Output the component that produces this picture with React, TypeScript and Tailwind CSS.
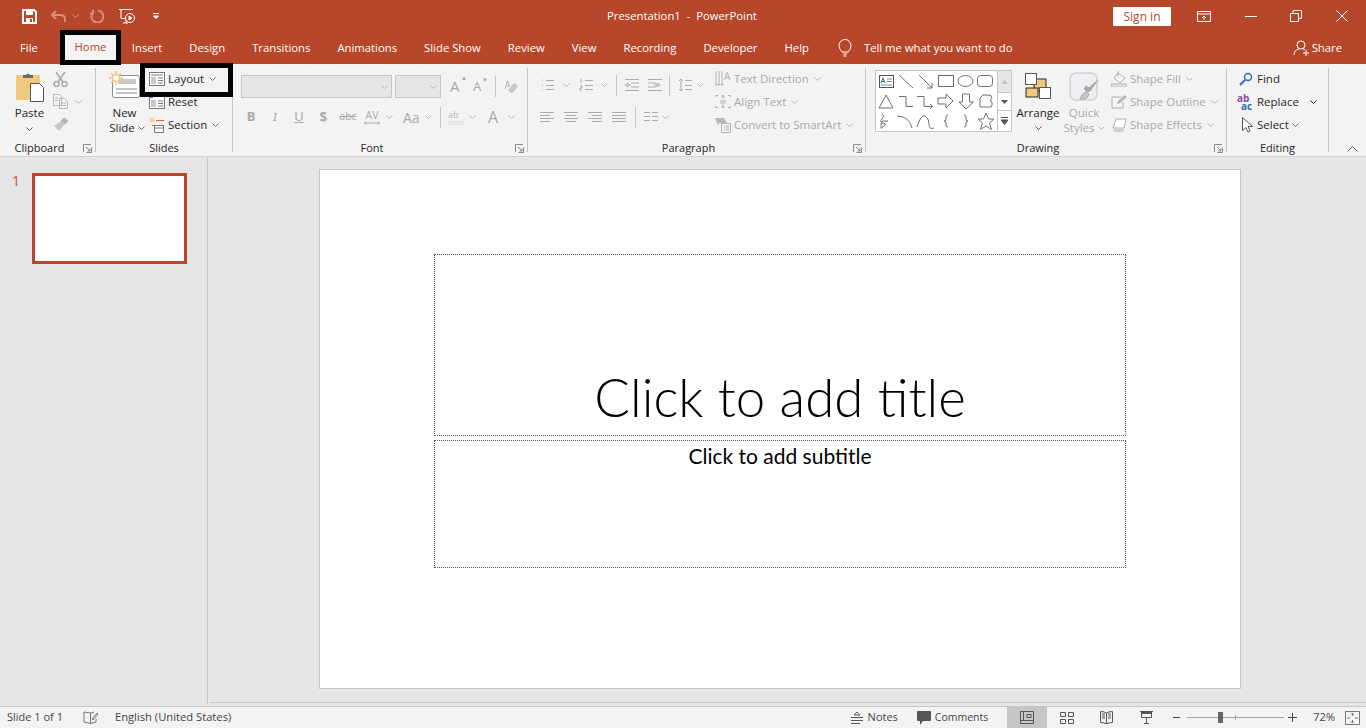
import type { ReactNode } from "react";

const ui = "font-['Open_Sans','Noto_Sans',sans-serif]";

function Ico({ w, h, children, className = "" }: { w: number; h: number; children: ReactNode; className?: string }) {
  return (
    <svg width={w} height={h} viewBox={`0 0 ${w} ${h}`} fill="none" stroke="currentColor" strokeWidth="1" className={`shrink-0 ${className}`}>
      {children}
    </svg>
  );
}

function Chev({ className = "text-[#6a6a6a]" }: { className?: string }) {
  return (
    <Ico w={7} h={4} className={className}>
      <path d="M.5.5 3.5 3.5 6.5.5" />
    </Ico>
  );
}

function Launcher() {
  return (
    <Ico w={9} h={9} className="absolute right-[3px] top-[4px] text-[#8a8a8a]">
      <path d="M.5 8V.5H8M8.5 3.5v5h-5M3 3l4 4M7 4.5V7H4.5" />
    </Ico>
  );
}

function Group({ w, label, launcher, children }: { w: string; label: string; launcher?: boolean; children: ReactNode }) {
  return (
    <div className={`flex flex-col shrink-0 ${w}`}>
      <div className="h-[76px] flex">{children}</div>
      <div className={`relative h-[16px] text-center text-[11px] leading-[16px] text-[#262626] ${launcher ? "pr-[16px]" : ""}`}>
        {label}
        {launcher && <Launcher />}
      </div>
    </div>
  );
}

const Sep = () => <div className="w-px h-[84px] mt-[4px] bg-[#c6c6c6] shrink-0" />;
const MiniSep = ({ h = "h-[21px]" }: { h?: string }) => <div className={`w-px bg-[#c6c6c6] shrink-0 ${h}`} />;

function SmallRow({ icon, text, chev, dim, gap = "gap-[3px]" }: { icon: ReactNode; text: string; chev?: boolean; dim?: boolean; gap?: string }) {
  return (
    <div className={`h-[23px] flex items-center whitespace-nowrap ${gap} text-[11.5px] ${dim ? "text-[#a9a9a9]" : "text-[#262626]"}`}>
      {icon}
      <span>{text}</span>
      {chev && <Chev className={`ml-[2px] ${dim ? "text-[#b5b5b5]" : "text-[#6a6a6a]"}`} />}
    </div>
  );
}

function Lines({ d }: { d: string }) {
  return (
    <Ico w={15} h={14} className="text-[#ababab]">
      <path d={d} />
    </Ico>
  );
}

const shapes: ReactNode[] = [
  <g key="tb"><rect x="3.5" y="4.5" width="14" height="12" stroke="#555" fill="#fff" /><path d="M5 12l2-5 2 5M6 10.500h2" stroke="#2f6db5" /><path d="M11 8h5M11 10.500h5M5 14h11" stroke="#8a8a8a" /></g>,
  <path key="l" d="M3 4 17 17" />,
  <path key="la" d="M3 4 16 17M16 12v5h-5" />,
  <rect key="r" x="2.500" y="4.500" width="15" height="11" />,
  <ellipse key="e" cx="9.500" cy="10" rx="7.500" ry="5.500" />,
  <rect key="rr" x="1.500" y="4.500" width="15" height="11" rx="3" />,
  <path key="t" d="M10 4 17 17H3Z" />,
  <path key="el" d="M3 5.500h7v10h7" />,
  <path key="ela" d="M1 5.500h7v10h8M14 13l2.500 2.500L14 18" />,
  <path key="ar" d="M2 7h8V3l7 7-7 7v-4H2Z" />,
  <path key="ad" d="M6.500 3h7v8h4l-7.500 7L3 11h3.500Z" />,
  <path key="sn" d="M4 10V7l3-3h5q4 0 4 3l-2 3q3 0 2 4l-1 2H4Z" />,
  <path key="fr" d="M6 3q3 2 0 5t1 4 2 2-3 3-1-3 4-4 2-1" />,
  <path key="c" d="M1 5q12 0 15 12" />,
  <path key="cv" d="M1 16Q5 3 9 5t4 8 5 4" />,
  <path key="bl" d="M12 4q-2 0-2 2v2q0 2-2 2 2 0 2 2v2q0 2 2 2" />,
  <path key="br" d="M8 4q2 0 2 2v2q0 2 2 2-2 0-2 2v2q0 2-2 2" />,
  <path key="st" d="M10 2l2.500 6H18l-4.500 4 2 6.500L10 15l-5.500 3.500 2-6.500L2 8h5.500Z" />,
];

export default function App() {
  const tabs = ["Insert", "Design", "Transitions", "Animations", "Slide Show", "Review", "View", "Recording", "Developer", "Help"];
  return (
    <div className={`${ui} relative w-[1366px] h-[728px] overflow-hidden flex flex-col bg-[#e6e6e6] text-[#262626]`}>
      {/* title bar */}
      <div className="h-[32px] bg-[#b7472a] flex items-center text-white shrink-0 relative">
        <div className="flex items-center pl-[22px]">
          <Ico w={15} h={15} className="text-white">
            <path d="M1 1h11l2 2v11H1Z" strokeWidth="2" />
            <path d="M4 2h7v4H4ZM4 9h7v4H4Z" fill="currentColor" stroke="none" />
            <path d="M8 10h2v3H8Z" fill="#b7472a" stroke="none" />
          </Ico>
          <Ico w={15} h={13} className="ml-[14px] text-[#d78f7c]">
            <path d="M5 1 1 5l4 4M1 5h8q5 0 5 4v3" strokeWidth="2" />
          </Ico>
          <Chev className="ml-[6px] text-[#d78f7c]" />
          <Ico w={14} h={14} className="ml-[11px] text-[#d78f7c]">
            <path d="M4 2.500A6 6 0 1 0 8 1.500M3 .5v4H0" strokeWidth="2" />
          </Ico>
          <Ico w={17} h={17} className="ml-[15px] text-white">
            <path d="M0 1.500h14M2 1.500v9h5M4 15h5M7 12v3" />
            <circle cx="11" cy="10" r="4.500" />
            <path d="M10 8v4l3-2Z" fill="currentColor" />
          </Ico>
          <Ico w={6} h={6} className="ml-[17px] text-white">
            <path d="M0 .5h6M.5 3h5L3 5.500Z" fill="currentColor" />
          </Ico>
        </div>
        <div className="absolute left-[607px] top-[7px] text-[11.300px] leading-[17px] whitespace-pre">Presentation1  -  PowerPoint</div>
        <div className="ml-auto flex items-center">
          <div className="w-[58px] h-[19px] bg-white rounded-[1px] text-[#b7472a] text-[12px] leading-[19px] text-center">Sign in</div>
          <Ico w={14} h={11} className="ml-[26px] text-white">
            <path d="M.5.5h13v10H.5ZM.5 3h13M7 9V5M5 7l2-2 2 2" />
          </Ico>
          <Ico w={12} h={1} className="ml-[34px] text-white">
            <path d="M0 .5h12" />
          </Ico>
          <Ico w={12} h={12} className="ml-[33px] text-white">
            <path d="M.5 3.500h8v8h-8ZM3 3.500V.5h8.500v8H8.500" />
          </Ico>
          <Ico w={12} h={12} className="ml-[34px] mr-[18px] text-white">
            <path d="M.5.5l11 11M11.500.5l-11 11" />
          </Ico>
        </div>
      </div>

      {/* tab row */}
      <div className="h-[32px] bg-[#b7472a] flex items-center text-white text-[11.300px] shrink-0">
        <span className="ml-[20px]">File</span>
        <span className="ml-[35px] text-[#b7472a]">Home</span>
        <div className="ml-[27px] flex gap-[27px]">
          {tabs.map((t) => (
            <span key={t}>{t}</span>
          ))}
        </div>
        <Ico w={14} h={18} className="ml-[29px] text-white">
          <path d="M4 13Q1 10 1 6.500a6 6 0 0 1 12 0Q13 10 10 13ZM5 15h4M5.500 17h3" />
        </Ico>
        <span className="ml-[12px]">Tell me what you want to do</span>
        <div className="ml-auto mr-[24px] flex items-center gap-[3px]">
          <Ico w={16} h={16} className="text-white">
            <circle cx="8" cy="5" r="4" />
            <path d="M1 15q0-5 5-6M10 9l2 .5M13 10v6M10 13h6" />
          </Ico>
          <span>Share</span>
        </div>
      </div>

      {/* ribbon */}
      <div className="h-[93px] bg-[#f3f3f3] border-b border-[#d2d2d2] flex shrink-0">
        <Group w="w-[95px]" label="Clipboard" launcher>
          <div className="w-[53px] flex flex-col items-center pt-[8px] pl-[6px]">
            <Ico w={30} h={31}>
              <rect x="1" y="3" width="24" height="25" rx="1" fill="#f0c97f" stroke="none" />
              <path d="M8 6V3h3q2-3 4 0h3v3Z" fill="#6a6a6a" stroke="none" />
              <path d="M15.500 11.500h9l4 4v14h-13Z" fill="#fff" stroke="#555" />
            </Ico>
            <span className="text-[11.5px] leading-[14px] mt-[3px]">Paste</span>
            <Chev className="mt-[7px] text-[#555]" />
          </div>
          <div className="flex flex-col pt-[3px]">
            <div className="h-[23px] flex items-center">
              <Ico w={15} h={16} className="text-[#ababab]">
                <path d="M3 1l7 10M12 1 5 11" strokeWidth="1.500" />
                <circle cx="3.500" cy="13" r="2.500" strokeWidth="1.500" />
                <circle cx="11.500" cy="13" r="2.500" strokeWidth="1.500" />
              </Ico>
            </div>
            <div className="h-[23px] flex items-center gap-[7px]">
              <Ico w={15} h={15} className="text-[#b8b8b8]">
                <path d="M.5.5h6l2 2v9h-8ZM6.500 4.500h5l3 3v7h-8ZM2 4h3M2 6.500h3M8 9h5M8 11.500h5" />
              </Ico>
              <Chev className="text-[#b5b5b5]" />
            </div>
            <div className="h-[23px] flex items-center">
              <Ico w={17} h={15} className="text-[#b5b5b5]">
                <path d="M11 1l4 3-3 3-4-3Z" fill="currentColor" />
                <path d="M8 4 1 9l5 5 6-7Z" fill="#c8c8c8" stroke="none" />
              </Ico>
            </div>
          </div>
        </Group>
        <Sep />
        <Group w="w-[136px]" label="Slides">
          <div className="w-[53px] flex flex-col items-center pt-[7px]">
            <Ico w={31} h={28} className="text-[#8a8a8a] ml-[4px]">
              <rect x="3.500" y="4.500" width="27" height="22" rx="2" fill="#fff" />
              <path d="M9 8h18v5H9Z" fill="#c8c8c8" stroke="none" />
              <path d="M7 18h21M7 22h21" />
              <path d="M7 0v14M0 7h14M2 2l10 10M12 2 2 12" stroke="#f0c97f" strokeWidth="1.500" />
              <circle cx="7" cy="7" r="3.500" fill="#fff" stroke="#f0c97f" strokeWidth="1.500" />
            </Ico>
            <span className="text-[11.5px] leading-[15px] mt-[6px] ml-[4px]">New</span>
            <span className="text-[11.5px] leading-[15px] flex items-center gap-[3px] ml-[9px]">
              Slide
              <Chev />
            </span>
          </div>
          <div className="flex flex-col pt-[3px]">
            <SmallRow
              text="Layout"
              chev
              icon={
                <Ico w={16} h={14} className="text-[#777]">
                  <rect x=".5" y=".5" width="15" height="13" fill="#fff" />
                  <path d="M2 3h12" stroke="#777" />
                  <path d="M2 5h5v7H2Z" fill="#c8c8c8" stroke="none" />
                  <path d="M9 6h5M9 8.500h5M9 11h5" />
                </Ico>
              }
            />
            <SmallRow
              text="Reset"
              icon={
                <Ico w={16} h={14} className="text-[#777]">
                  <rect x=".5" y=".5" width="15" height="13" fill="#fff" />
                  <path d="M2 5h5v7H2Z" fill="#c8c8c8" stroke="none" />
                  <path d="M9 6h5M9 8.500h5M9 11h5" />
                  <path d="M0 0h4v3H0Z" fill="#4a86c5" stroke="none" />
                </Ico>
              }
            />
            <SmallRow
              text="Section"
              chev
              icon={
                <Ico w={16} h={16}>
                  <path d="M3 0v6M0 3h6M1 1l4 4M5 1 1 5" stroke="#f0c97f" />
                  <path d="M7 3.500h8M3 8.500h12" stroke="#d2622f" />
                  <path d="M5.500 8.500h9v7h-9ZM5.500 11h9" stroke="#777" fill="#fff" />
                </Ico>
              }
            />
          </div>
        </Group>
        <Sep />
        <Group w="w-[294px]" label="Font" launcher>
          <div className="flex flex-col pl-[8px] text-[#a9a9a9]">
            <div className="flex items-center h-[23px] mt-[11px]">
              <div className="w-[151px] h-[23px] bg-[#e6e6e6] border border-[#c6c6c6] flex items-center justify-end pr-[3px]">
                <Chev className="text-[#b5b5b5]" />
              </div>
              <div className="w-[46px] h-[23px] ml-[3px] bg-[#e6e6e6] border border-[#c6c6c6] flex items-center justify-end pr-[3px]">
                <Chev className="text-[#b5b5b5]" />
              </div>
              <span className="ml-[9px] w-[14px] text-[15px] relative">A<span className="absolute -right-[3px] -top-[1px] text-[6px]">▲</span></span>
              <span className="ml-[9px] w-[12px] text-[13px] relative">A<span className="absolute -right-[3px] -top-[1px] text-[6px]">▼</span></span>
              <div className="ml-[10px] w-px h-[21px] bg-[#c6c6c6]" />
              <Ico w={14} h={14} className="ml-[8px] text-[#b5b5b5]">
                <path d="M7 13l-3-3 6-7 4 3-5 7Z" fill="#c8c8c8" stroke="none" />
                <path d="M1 9 3.500 1 6 7M2 6h3" />
              </Ico>
            </div>
            <div className="flex items-center h-[24px] mt-[7px] text-[13px]">
              <span className="w-[20px] text-center font-bold">B</span>
              <span className="w-[20px] ml-[4px] text-center italic font-serif">I</span>
              <span className="w-[20px] ml-[4px] text-center underline">U</span>
              <span className="w-[20px] ml-[4px] text-center font-bold [text-shadow:1px_1px_1px_#ccc]">S</span>
              <span className="w-[24px] ml-[3px] text-center text-[10.5px] line-through">abc</span>
              <span className="w-[18px] ml-[3px] flex flex-col items-center text-[10.5px] leading-[11px]">
                AV
                <Ico w={16} h={4} className="text-[#b0b0b0]"><path d="M0 2h16M2 .5 .5 2 2 3.500M14 .5 15.500 2 14 3.500" /></Ico>
              </span>
              <Chev className="ml-[5px] text-[#b5b5b5]" />
              <span className="w-[18px] ml-[10px] text-[14px]">Aa</span>
              <Chev className="ml-[4px] text-[#b5b5b5]" />
              <div className="ml-[8px] w-px h-[21px] bg-[#c6c6c6]" />
              <div className="ml-[7px] w-[16px] h-[16px] flex flex-col text-[9px] leading-[11px] text-[#b5b5b5]">
                <div className="h-[11px]">ab</div>
                <div className="mt-[1px] h-[4px] bg-[#e6e6e6]" />
              </div>
              <Chev className="ml-[5px] text-[#b5b5b5]" />
              <span className="ml-[12px] w-[14px] text-[16px]">A</span>
              <Chev className="ml-[6px] text-[#b5b5b5]" />
            </div>
          </div>
        </Group>
        <Sep />
        <Group w="w-[337px]" label="Paragraph" launcher>
          <div className="flex flex-col pl-[12px] pt-[10px] w-[187px]">
            <div className="flex items-center h-[22px]">
              <Lines d="M2 2h1M2 7h1M2 12h1M6 2.500h8M6 7.500h8M6 11.500h8" />
              <Chev className="ml-[8px] text-[#b5b5b5]" />
              <div className="ml-[9px]"><Lines d="M2 1v4M1 8h2v2H1v2h2M6 2.500h8M6 7.500h8M6 11.500h8" /></div>
              <Chev className="ml-[7px] text-[#b5b5b5]" />
              <div className="ml-[8px]"><MiniSep /></div>
              <div className="ml-[7px]"><Lines d="M1 1.500h14M7 5h8M1 7l3-2v4ZM4 7h3M7 9h8M1 12.500h14" /></div>
              <div className="ml-[8px]"><Lines d="M1 1.500h14M1 5h8M13 7l-3-2v4ZM7 7h3M1 9h8M1 12.500h14" /></div>
              <div className="ml-[7px]"><MiniSep /></div>
              <div className="ml-[8px]"><Lines d="M3 1v12M1 3l2-2 2 2M1 11l2 2 2-2M7 2.500h7M7 7.500h7M7 11.500h7" /></div>
              <Chev className="ml-[4px] text-[#b5b5b5]" />
            </div>
            <div className="flex items-center h-[22px] mt-[10px]">
              <Lines d="M0 2.500h14M0 5.500h10M0 8.500h14M0 11.500h10" />
              <div className="ml-[9px]"><Lines d="M0 2.500h14M2 5.500h10M0 8.500h14M2 11.500h10" /></div>
              <div className="ml-[9px]"><Lines d="M0 2.500h14M4 5.500h10M0 8.500h14M4 11.500h10" /></div>
              <div className="ml-[9px]"><Lines d="M0 2.500h14M0 5.500h14M0 8.500h14M0 11.500h14" /></div>
              <div className="ml-[8px]"><MiniSep /></div>
              <div className="ml-[8px]"><Lines d="M0 2.500h6M8 2.500h6M0 6.500h6M8 6.500h6M0 10.500h6M8 10.500h6" /></div>
              <Chev className="ml-[3px] text-[#b5b5b5]" />
            </div>
          </div>
          <div className="flex flex-col pt-[3px]">
            <SmallRow text="Text Direction" chev dim icon={
              <div className="w-[16px] h-[16px] flex text-[10px] leading-[11px] text-[#b0b0b0]">
                <Ico w={9} h={16} className="text-[#b0b0b0]">
                  <path d="M1 0v14M4 0v14M7 0v14M0 13l1 1.500L2 13M3 13l1 1.500L5 13M6 13l1 1.500L8 13" />
                </Ico>
                <span className="h-[11px]">A</span>
              </div>
            } />
            <SmallRow text="Align Text" chev dim icon={
              <Ico w={16} h={16} className="text-[#b0b0b0]">
                <path d="M.5 3V1.500H3M13 1.500h2.500V3M.5 12v1.500H3M13 13.500h2.500V12M5 7h6M5 9h6M8 1v4M6.500 3 8 1l1.500 2M8 10v4M6.500 12 8 14l1.500-2" />
              </Ico>
            } />
            <SmallRow text="Convert to SmartArt" chev dim icon={
              <Ico w={16} h={16} className="text-[#b0b0b0]">
                <path d="M0 1h9l3 5H4L3 9Z" fill="#b8b8b8" stroke="none" />
                <path d="M6.500 6.500h9v9h-9Z" fill="#f3f3f3" />
                <path d="M9 9h1M11 9h3M9 11h1M11 11h3M9 13h1M11 13h3" />
              </Ico>
            } />
          </div>
        </Group>
        <Sep />
        <Group w="w-[360px]" label="Drawing" launcher>
          <div className="ml-[9px] mt-[6px] h-[62px] w-[137px] border border-[#c6c6c6] bg-white flex shrink-0">
            <div className="grid grid-cols-[repeat(6,20px)] grid-rows-[repeat(3,20px)] w-[121px]">
              {shapes.map((s, i) => (
                <Ico key={i} w={20} h={20} className="text-[#6e6e6e]">
                  {s}
                </Ico>
              ))}
            </div>
            <div className="w-[14px] border-l border-[#c6c6c6] flex flex-col">
              <div className="h-[21px] bg-[#e6e6e6] flex items-center justify-center">
                <Ico w={7} h={4} className="text-[#c0c0c0]"><path d="M0 4 3.500 0 7 4Z" fill="currentColor" stroke="none" /></Ico>
              </div>
              <div className="h-[19px] border-y border-[#c6c6c6] flex items-center justify-center">
                <Ico w={7} h={4} className="text-[#555]"><path d="M0 0 3.500 4 7 0Z" fill="currentColor" stroke="none" /></Ico>
              </div>
              <div className="flex-1 flex items-center justify-center">
                <Ico w={7} h={8} className="text-[#555]"><path d="M0 .5h7M0 3 3.500 7.500 7 3Z" fill="currentColor" /></Ico>
              </div>
            </div>
          </div>
          <div className="w-[52px] flex flex-col items-center pt-[8px]">
            <Ico w={28} h={28}>
              <rect x="10" y="7" width="12" height="12" fill="#f0c97f" />
              <rect x="2" y="16" width="12" height="9" fill="#f0c97f" />
              <rect x="1.500" y="1.500" width="11" height="11" stroke="#555" fill="#fff" />
              <rect x="15.500" y="15.500" width="11" height="11" stroke="#555" fill="#fff" />
            </Ico>
            <span className="text-[11.5px] leading-[15px] mt-[5px]">Arrange</span>
            <Chev className="mt-[6px] text-[#555]" />
          </div>
          <div className="w-[40px] mr-[7px] flex flex-col items-center pt-[8px] text-[#a9a9a9] whitespace-nowrap">
            <Ico w={30} h={30}>
              <rect x="1" y="1" width="27" height="27" rx="6" fill="#f1eef3" stroke="#d2d2d2" strokeWidth="1.500" />
              <path d="M29 8 20 16l-3-2-2 3 3 3 3-1Z" fill="#a8a8a8" />
              <path d="M11 27q2-6 6-7l3 2q-1 4-4 5Z" fill="#c8c8c8" />
            </Ico>
            <span className="text-[11.5px] leading-[15px] mt-[3px]">Quick</span>
            <span className="text-[11.5px] leading-[15px] flex items-center gap-[3px]">
              Styles
              <Chev className="text-[#b5b5b5]" />
            </span>
          </div>
          <div className="flex flex-col pt-[3px]">
            <SmallRow text="Shape Fill" chev dim icon={
              <Ico w={16} h={16} className="text-[#b0b0b0]">
                <path d="M7 2l7 5-5 5-6-5Z" />
                <path d="M7 0v5M0 13h16v3H0Z" fill="#e6e6e6" />
              </Ico>
            } />
            <SmallRow text="Shape Outline" chev dim icon={
              <Ico w={16} h={16} className="text-[#b0b0b0]">
                <path d="M10 3H1v11h11V8" />
                <path d="M6 10l1-3 7-6 2 2-7 6Z" fill="#b8b8b8" stroke="none" />
              </Ico>
            } />
            <SmallRow text="Shape Effects" chev dim icon={
              <Ico w={16} h={16} className="text-[#b0b0b0]">
                <path d="M2 11 5 2h10l-2 9Z" fill="#fff" />
                <path d="M2 12h11l-1 3H3Z" fill="#cfcfcf" stroke="none" />
              </Ico>
            } />
          </div>
        </Group>
        <Sep />
        <Group w="w-[101px]" label="Editing">
          <div className="flex flex-col pt-[3px] pl-[12px]">
            <SmallRow text="Find" gap="gap-[4px]" icon={
              <Ico w={14} h={14} className="text-[#2f6db5]">
                <circle cx="9" cy="5" r="3.500" strokeWidth="1.500" />
                <path d="M6 8 1 13" strokeWidth="2" />
              </Ico>
            } />
            <div className="flex items-center h-[23px] text-[11.5px] -ml-[2px]">
              <div className="w-[16px] h-[16px] flex flex-col text-[10px] leading-[8px] font-bold">
                <div className="h-[8px] text-[#7e4ea3]">ab</div>
                <div className="h-[8px] pl-[4px] text-[#2f6db5]">ac</div>
              </div>
              <span className="ml-[4px]">Replace</span>
              <Chev className="ml-[11px]" />
            </div>
            <SmallRow text="Select" chev gap="gap-[1px]" icon={
              <Ico w={17} h={16} className="text-[#555]">
                <path d="M3.500 .5v13l3.500-3 2 4.500 2-1-2-4.500h4.500Z" fill="#fff" />
              </Ico>
            } />
          </div>
        </Group>
        <Sep />
        <div className="flex-1 flex justify-end items-end pb-[4px] pr-[8px]">
          <Ico w={11} h={6} className="text-[#555]">
            <path d="M.5 5.500 5.500.5l5 5" />
          </Ico>
        </div>
      </div>

      {/* main area */}
      <div className="flex-1 flex min-h-0">
        <div className="w-[208px] h-[547px] border-r border-[#c6c6c6] flex shrink-0">
          <span className="ml-[12px] mt-[15px] text-[14px] leading-[18px] text-[#c8502f]">1</span>
          <div className="ml-[12px] mt-[16px] w-[155px] h-[91px] border-[3px] border-[#b7472a] bg-white" />
        </div>
        <div className="flex-1 flex flex-col">
          <div className="flex-1 pl-[111px] pt-[12px]">
            <div className="w-[922px] h-[520px] bg-white border border-[#c6c6c6] pt-[84px] pl-[114px] font-['Lato',sans-serif] text-black">
              <div className="w-[692px] h-[182px] border border-dotted border-[#555] flex items-end justify-center">
                <span className="text-[52.800px] leading-[76px] font-light whitespace-nowrap">Click to add title</span>
              </div>
              <div className="w-[692px] h-[128px] mt-[4px] border border-dotted border-[#555] flex justify-center">
                <span className="text-[21px] leading-[30px] whitespace-nowrap">Click to add subtitle</span>
              </div>
            </div>
          </div>
          <div className="h-[4px] ml-[2px] border-t border-[#c6c6c6] shrink-0" />
        </div>
      </div>

      {/* status bar */}
      <div className="h-[22px] bg-[#f3f3f3] border-t border-[#c6c6c6] flex items-center text-[11px] text-[#444] shrink-0">
        <span className="ml-[7px]">Slide 1 of 1</span>
        <Ico w={16} h={14} className="ml-[20px] text-[#777]">
          <path d="M7.500 2 1 1v10l6.500 1.500V2Zm0 0L11 1M13 8v3l-5.500 1.500M9 8l5-6 1 1-5 6Z" />
        </Ico>
        <span className="ml-[16px] text-[11.200px]">English (United States)</span>
        <div className="ml-auto flex items-center h-full">
          <Ico w={12} h={12} className="text-[#555]">
            <path d="M3 3l3-3 3 3ZM0 5.500h12M0 8.500h12M0 11.500h9" />
          </Ico>
          <span className="ml-[5px]">Notes</span>
          <Ico w={14} h={14} className="ml-[19px] text-[#555]">
            <path d="M1 0h12q1 0 1 1v8q0 1-1 1H6l-3 4v-4H1q-1 0-1-1V1q0-1 1-1Z" fill="currentColor" stroke="none" />
          </Ico>
          <span className="ml-[4px] text-[10.500px]">Comments</span>
          <div className="ml-[19px] w-[40px] h-full bg-[#c6c6c6] flex items-center justify-center">
            <Ico w={14} h={13} className="text-[#555]">
              <path d="M.5.5h13v12H.5ZM.5 9.500h13M3.500.5v9M7 3.500h4v3H7Z" />
            </Ico>
          </div>
          <Ico w={14} h={12} className="ml-[13px] text-[#555]">
            <path d="M.5.5h5v4h-5ZM8.500.5h5v4h-5ZM.5 7.500h5v4h-5ZM8.500 7.500h5v4h-5Z" />
          </Ico>
          <Ico w={13} h={13} className="ml-[26px] text-[#555]">
            <path d="M.5.5q4 0 6 1.500 2-1.500 6-1.500v11q-4 0-6 1.500-2-1.500-6-1.500ZM6.500 2v11M2 3h3M2 5h3M2 7h3M8 3h3M8 5h3M8 7h3" />
          </Ico>
          <Ico w={13} h={13} className="ml-[27px] text-[#555]">
            <path d="M0 .5h13M1.500.5v6h10v-6M6.500 7v5M4 12.500h5" />
            <path d="M1.500 1h10v2h-10Z" fill="currentColor" stroke="none" />
          </Ico>
          <Ico w={7} h={1} className="ml-[20px] text-[#444]">
            <path d="M0 .5h7" />
          </Ico>
          <div className="ml-[7px] w-[97px] h-[11px] flex items-center relative">
            <div className="w-full h-px bg-[#a6a6a6]" />
            <div className="absolute left-[48px] top-[3px] w-px h-[5px] bg-[#a6a6a6]" />
            <div className="absolute left-[31px] top-0 w-[5px] h-[11px] bg-[#666]" />
          </div>
          <Ico w={9} h={9} className="ml-[4px] text-[#444]">
            <path d="M0 4.500h9M4.500 0v9" />
          </Ico>
          <span className="ml-[16px]">72%</span>
          <Ico w={15} h={14} className="ml-[10px] mr-[6px] text-[#777]">
            <path d="M.5.5h14v13H.5ZM7.500 2v3M6 3.500l1.500-1.500L9 3.500M7.500 12V9M6 10.500 7.500 12 9 10.500M2 7h3M10 7h3" />
          </Ico>
        </div>
      </div>

      {/* black callouts drawn over the screenshot */}
      <div className="absolute left-[60px] top-[30px] w-[61px] h-[35px] border-[5px] border-black flex items-center justify-center bg-[#f3f3f3] text-[11.300px] text-[#b7472a]">Home</div>
      <div className="absolute left-[140px] top-[63px] w-[93px] h-[34px] border-[5px] border-black" />
    </div>
  );
}
